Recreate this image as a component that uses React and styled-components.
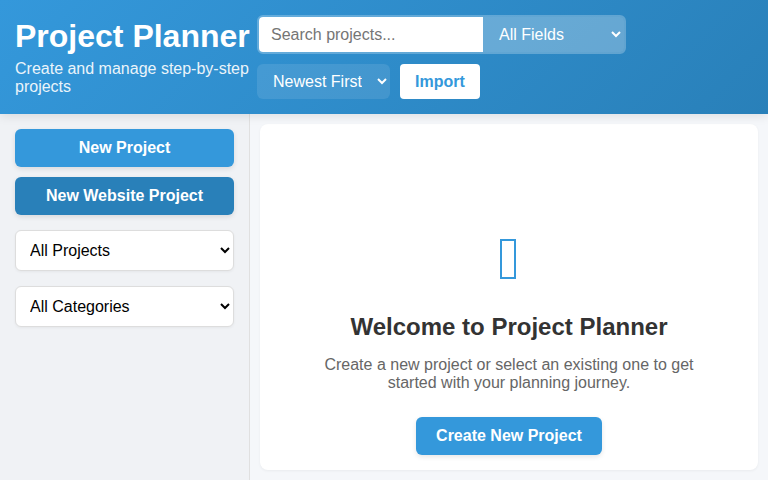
import React from "react";
import styled, { createGlobalStyle } from "styled-components";

const GlobalStyle = createGlobalStyle`
  * {
    box-sizing: border-box;
  }
  html, body {
    margin: 0;
    padding: 0;
    height: 100%;
    overflow: hidden;
    font-family: "Liberation Sans", Arial, sans-serif;
  }
`;

export default function App() {
  return (
    <Page>
      <GlobalStyle />
      <Header>
        <TitleBlock>
          <Title>Project Planner</Title>
          <Subtitle>Create and manage step-by-step projects</Subtitle>
        </TitleBlock>
        <Controls>
          <SearchGroup>
            <SearchInput placeholder="Search projects..." />
            <FieldSelect defaultValue="all">
              <option value="all">All Fields</option>
              <option value="title">Title</option>
            </FieldSelect>
          </SearchGroup>
          <SortSelect defaultValue="newest">
            <option value="newest">Newest First</option>
            <option value="oldest">Oldest First</option>
          </SortSelect>
          <ImportButton>Import</ImportButton>
        </Controls>
      </Header>
      <Body>
        <Sidebar>
          <SideButton>New Project</SideButton>
          <SideButton $dark>New Website Project</SideButton>
          <FilterSelect defaultValue="all">
            <option value="all">All Projects</option>
          </FilterSelect>
          <FilterSelect defaultValue="all">
            <option value="all">All Categories</option>
          </FilterSelect>
        </Sidebar>
        <Main>
          <WelcomeCard>
            <WelcomeIcon viewBox="0 0 18 40" aria-hidden="true">
              <rect x="1" y="1" width="14" height="38" />
            </WelcomeIcon>
            <WelcomeTitle>Welcome to Project Planner</WelcomeTitle>
            <WelcomeText>
              Create a new project or select an existing one to get started with your planning journey.
            </WelcomeText>
            <CreateButton>Create New Project</CreateButton>
          </WelcomeCard>
        </Main>
      </Body>
    </Page>
  );
}

const Page = styled.div`
  width: 768px;
  height: 480px;
  display: flex;
  flex-direction: column;
  background: #f5f7fa;
  overflow: hidden;
`;
const Header = styled.header`
  position: relative;
  z-index: 1;
  height: 114px;
  flex: none;
  display: flex;
  align-items: center;
  gap: 8px;
  padding: 15px;
  color: white;
  background: linear-gradient(135deg, #3498db, #2980b9);
  box-shadow: 0 2px 10px rgba(0, 0, 0, 0.1);
`;
const TitleBlock = styled.div`
  width: 234px;
  flex: none;
`;
const Title = styled.h1`
  margin: 0 0 5px;
  font-size: 32px;
  line-height: 37px;
  font-weight: 700;
  white-space: nowrap;
`;
const Subtitle = styled.p`
  margin: 0;
  font-size: 16px;
  line-height: 18px;
  opacity: 0.9;
`;
const Controls = styled.div`
  width: 380px;
  display: flex;
  flex-wrap: wrap;
  align-items: center;
  gap: 10px;
`;
const SearchGroup = styled.div`
  width: 369px;
  height: 39px;
  display: flex;
  border: 2px solid rgba(255, 255, 255, 0.25);
  border-radius: 6px;
  overflow: hidden;
`;
const SearchInput = styled.input`
  width: 224px;
  border: 0;
  outline: 0;
  padding: 8px 12px;
  font: 16px "Liberation Sans", Arial, sans-serif;
  background: white;
  color: #333;

  &::placeholder {
    color: #757575;
  }
`;
const FieldSelect = styled.select`
  flex: 1;
  border: 0;
  outline: 0;
  padding: 8px 12px;
  font: 16px "Liberation Sans", Arial, sans-serif;
  color: white;
  background: rgba(255, 255, 255, 0.28);
`;
const SortSelect = styled.select`
  width: 133px;
  height: 35px;
  border: 0;
  border-radius: 6px;
  padding: 8px 12px;
  font: 16px "Liberation Sans", Arial, sans-serif;
  color: white;
  background: rgba(255, 255, 255, 0.1);
`;
const ImportButton = styled.button`
  width: 80px;
  height: 35px;
  border: 0;
  border-radius: 4px;
  font: 700 16px "Liberation Sans", Arial, sans-serif;
  color: #3498db;
  background: white;
`;
const Body = styled.div`
  flex: 1;
  min-height: 0;
  display: flex;
`;
const Sidebar = styled.aside`
  width: 250px;
  flex: none;
  display: flex;
  flex-direction: column;
  padding: 15px;
  background: #f0f2f5;
  border-right: 1px solid #e0e0e0;
`;
const SideButton = styled.button`
  width: 219px;
  height: 38px;
  flex: none;
  margin-bottom: 10px;
  border: 0;
  border-radius: 6px;
  font: 700 16px "Liberation Sans", Arial, sans-serif;
  color: white;
  background: ${(p) => (p.$dark ? "#2980b9" : "#3498db")};
  box-shadow: 0 2px 5px rgba(0, 0, 0, 0.1);
`;
const FilterSelect = styled.select`
  width: 219px;
  height: 41px;
  flex: none;
  margin-top: 5px;
  margin-bottom: 10px;
  padding: 10px;
  border: 1px solid #ddd;
  border-radius: 6px;
  font: 16px "Liberation Sans", Arial, sans-serif;
  color: black;
  background: white;
  box-shadow: 0 1px 3px rgba(0, 0, 0, 0.05);
`;
const Main = styled.main`
  flex: 1;
  min-width: 0;
  display: flex;
  padding: 10px;
  background: #f5f7fa;
`;
const WelcomeCard = styled.section`
  flex: 1;
  display: flex;
  flex-direction: column;
  align-items: center;
  justify-content: flex-end;
  padding: 15px 20px;
  border-radius: 8px;
  background: white;
  box-shadow: 0 1px 3px rgba(0, 0, 0, 0.05);
  text-align: center;
`;
const WelcomeIcon = styled.svg`
  width: 18px;
  height: 40px;
  flex: none;
  margin-bottom: 34px;

  rect {
    fill: none;
    stroke: #3498db;
    stroke-width: 2;
  }
`;
const WelcomeTitle = styled.h2`
  margin: 0 0 15px;
  font-size: 24px;
  line-height: 28px;
  font-weight: 700;
  color: #333;
`;
const WelcomeText = styled.p`
  margin: 0 0 25px;
  max-width: 400px;
  font-size: 16px;
  line-height: 18px;
  color: #666;
`;
const CreateButton = styled.button`
  width: 186px;
  height: 38px;
  border: 0;
  border-radius: 6px;
  font: 700 16px "Liberation Sans", Arial, sans-serif;
  color: white;
  background: #3498db;
  box-shadow: 0 2px 5px rgba(0, 0, 0, 0.1);
`;
